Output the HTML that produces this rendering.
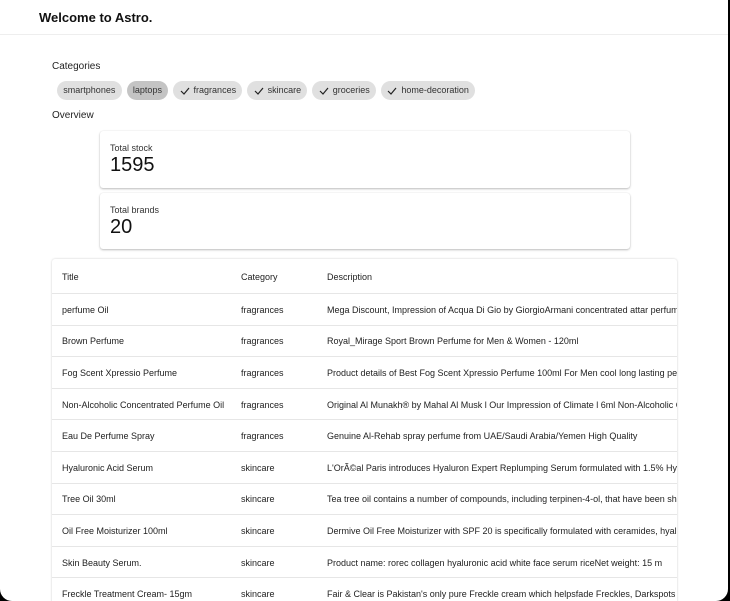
<!DOCTYPE html>
<html><head><meta charset="utf-8"><style>
*{box-sizing:border-box;margin:0;padding:0}
html,body{width:730px;height:601px;overflow:hidden;background:#000}
.win{position:absolute;left:0;top:0;width:728px;height:601px;background:#fff;border-radius:0 0 12px 12px;overflow:hidden;font-family:"Liberation Sans",Arial,sans-serif;color:#111}
.hdr{height:35px;border-bottom:1px solid #eee;padding-left:39px;font-size:13px;line-height:35px;font-weight:bold;color:#111}
.lbl{position:absolute;left:52px;font-size:10px;color:#222}
.chips{position:absolute;left:57px;top:81px;display:flex;gap:5px}
.chip{height:19px;border-radius:10px;background:#e0e0e0;font-size:9px;line-height:19px;padding:0 6.3px;color:#333;display:flex;align-items:center;white-space:nowrap}
.chip.sel{background:#c4c4c4}
.chip svg{margin-right:4px}
.card{position:absolute;left:100px;width:530px;background:#fff;border-radius:3px;box-shadow:0 1px 2px rgba(0,0,0,.25),0 0 1px rgba(0,0,0,.12);padding:12px 10px}
.card .t{font-size:9px;color:#333}
.card .v{font-size:20px;color:#111;margin-top:1px}
.tbl{position:absolute;left:52px;top:259px;width:625px;height:360px;overflow:hidden;box-shadow:0 0 2px rgba(0,0,0,.2);border-radius:3px}
.row{display:flex;height:31.6px;border-bottom:1px solid #e6e6e6;font-size:9px;color:#222;align-items:center;white-space:nowrap;padding-top:1px}
.row.h{height:35px}
.c1{width:189px;padding-left:10px;flex:none}
.c2{width:86px;flex:none}
.c3{flex:none}
</style></head><body><div class="win">
<div class="hdr">Welcome to Astro.</div>
<div class="lbl" style="top:61px">Categories</div>
<div class="chips">
<div class="chip">smartphones</div>
<div class="chip sel">laptops</div>
<div class="chip"><svg width="10" height="8" viewBox="0 0 10 8"><path d="M1 4l3 3 5-6" fill="none" stroke="#222" stroke-width="1.2"/></svg>fragrances</div>
<div class="chip"><svg width="10" height="8" viewBox="0 0 10 8"><path d="M1 4l3 3 5-6" fill="none" stroke="#222" stroke-width="1.2"/></svg>skincare</div>
<div class="chip"><svg width="10" height="8" viewBox="0 0 10 8"><path d="M1 4l3 3 5-6" fill="none" stroke="#222" stroke-width="1.2"/></svg>groceries</div>
<div class="chip"><svg width="10" height="8" viewBox="0 0 10 8"><path d="M1 4l3 3 5-6" fill="none" stroke="#222" stroke-width="1.2"/></svg>home-decoration</div>
</div>
<div class="lbl" style="top:110px">Overview</div>
<div class="card" style="top:131px;height:57px"><div class="t">Total stock</div><div class="v">1595</div></div>
<div class="card" style="top:193px;height:56px"><div class="t">Total brands</div><div class="v">20</div></div>
<div class="tbl">
<div class="row h"><div class="c1">Title</div><div class="c2">Category</div><div class="c3">Description</div></div>
<div class="row"><div class="c1">perfume Oil</div><div class="c2">fragrances</div><div class="c3">Mega Discount, Impression of Acqua Di Gio by GiorgioArmani concentrated attar perfume oil</div></div>
<div class="row"><div class="c1">Brown Perfume</div><div class="c2">fragrances</div><div class="c3">Royal_Mirage Sport Brown Perfume for Men &amp; Women - 120ml</div></div>
<div class="row"><div class="c1">Fog Scent Xpressio Perfume</div><div class="c2">fragrances</div><div class="c3">Product details of Best Fog Scent Xpressio Perfume 100ml For Men cool long lasting perfumes</div></div>
<div class="row"><div class="c1">Non-Alcoholic Concentrated Perfume Oil</div><div class="c2">fragrances</div><div class="c3">Original Al Munakh® by Mahal Al Musk l Our Impression of Climate l 6ml Non-Alcoholic Concentrated</div></div>
<div class="row"><div class="c1">Eau De Perfume Spray</div><div class="c2">fragrances</div><div class="c3">Genuine Al-Rehab spray perfume from UAE/Saudi Arabia/Yemen High Quality</div></div>
<div class="row"><div class="c1">Hyaluronic Acid Serum</div><div class="c2">skincare</div><div class="c3">L'OrÃ©al Paris introduces Hyaluron Expert Replumping Serum formulated with 1.5% Hyaluronic Acid</div></div>
<div class="row"><div class="c1">Tree Oil 30ml</div><div class="c2">skincare</div><div class="c3">Tea tree oil contains a number of compounds, including terpinen-4-ol, that have been shown to kill</div></div>
<div class="row"><div class="c1">Oil Free Moisturizer 100ml</div><div class="c2">skincare</div><div class="c3">Dermive Oil Free Moisturizer with SPF 20 is specifically formulated with ceramides, hyaluronic acid</div></div>
<div class="row"><div class="c1">Skin Beauty Serum.</div><div class="c2">skincare</div><div class="c3">Product name: rorec collagen hyaluronic acid white face serum riceNet weight: 15 m</div></div>
<div class="row"><div class="c1">Freckle Treatment Cream- 15gm</div><div class="c2">skincare</div><div class="c3">Fair &amp; Clear is Pakistan's only pure Freckle cream which helpsfade Freckles, Darkspots and</div></div>
</div>
</div></body></html>
